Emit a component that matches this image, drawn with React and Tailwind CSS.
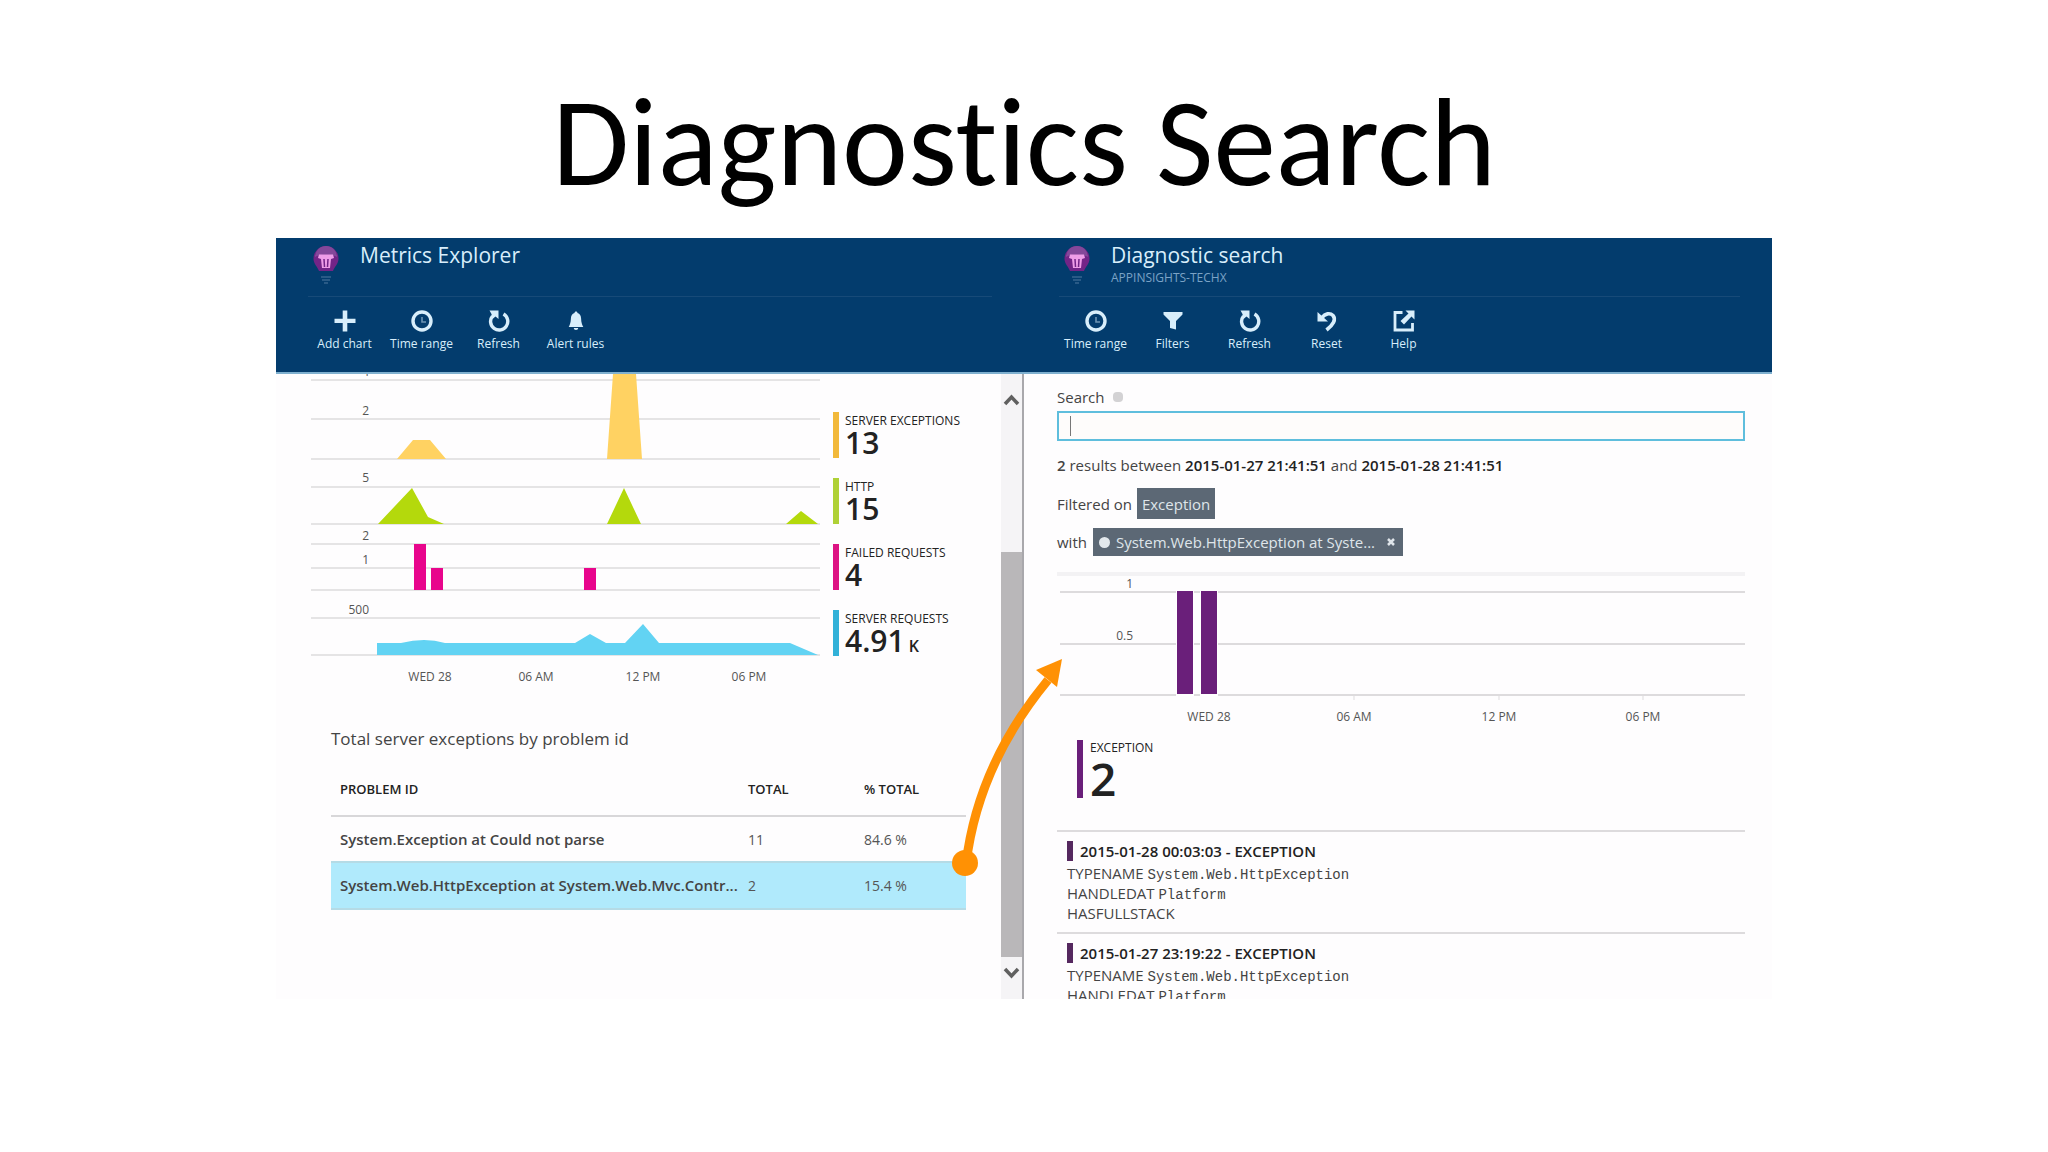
import React from "react";

const metricTools = [
  { label: "Add chart", icon: PlusIcon },
  { label: "Time range", icon: ClockIcon },
  { label: "Refresh", icon: RefreshIcon },
  { label: "Alert rules", icon: BellIcon },
];

const searchTools = [
  { label: "Time range", icon: ClockIcon },
  { label: "Filters", icon: FunnelIcon },
  { label: "Refresh", icon: RefreshIcon },
  { label: "Reset", icon: ResetIcon },
  { label: "Help", icon: HelpIcon },
];

const metrics = [
  { name: "SERVER EXCEPTIONS", value: "13", bar: "bg-[#f2b93b]" },
  { name: "HTTP", value: "15", bar: "bg-[#afd136]" },
  { name: "FAILED REQUESTS", value: "4", bar: "bg-[#dd1383]" },
  { name: "SERVER REQUESTS", value: "4.91", unit: "K", bar: "bg-[#32b1d8]" },
];

const problems = [
  { id: "System.Exception at Could not parse", total: 11, percent: "84.6 %" },
  {
    id: "System.Web.HttpException at System.Web.Mvc.Contr...",
    total: 2,
    percent: "15.4 %",
    selected: true,
  },
];

const events = ["2015-01-28 00:03:03", "2015-01-27 23:19:22"];

function PlusIcon() {
  return (
    <svg viewBox="0 0 22 22" className="size-[22px]" fill="currentColor">
      <path d="M8.7 0.5h4.6v8.2h8.2v4.4h-8.2v8.4h-4.6v-8.4h-8.2v-4.4h8.2z" />
    </svg>
  );
}

function ClockIcon() {
  return (
    <svg viewBox="0 0 22 22" className="size-[22px]" fill="none" stroke="currentColor">
      <circle cx="11" cy="11" r="9" strokeWidth="3.4" />
      <path d="M11 7v5h4" strokeWidth="1.6" opacity="0.5" />
    </svg>
  );
}

function RefreshIcon() {
  return (
    <svg viewBox="0 0 22 22" className="size-[22px]">
      <path
        d="M15.5 4a8.600 8.600 0 1 1-11 2"
        fill="none"
        stroke="currentColor"
        strokeWidth="3.4"
      />
      <path d="M1.500 0.500h9v8.500l-3-2.500-3 2.500-1-5z" fill="currentColor" />
    </svg>
  );
}

function BellIcon() {
  return (
    <svg viewBox="0 0 22 22" className="size-[22px]" fill="currentColor">
      <path d="M11 1.5c.9 0 1.5.6 1.5 1.6 2.4.8 3.5 2.8 3.6 5.4.1 4 .9 6 2.2 8.6H3.7c1.3-2.6 2.1-4.6 2.2-8.6.1-2.6 1.2-4.6 3.6-5.4 0-1 .6-1.6 1.5-1.6z" />
      <path d="M8.8 18h4.4c0 1.3-.9 2-2.2 2s-2.2-.7-2.2-2z" />
    </svg>
  );
}

function FunnelIcon() {
  return (
    <svg viewBox="0 0 22 22" className="size-[22px]" fill="currentColor">
      <path d="M1.500 2h19v2.500l-6.500 6.500v8.500l-6-1.500v-7l-6.500-6.500z" />
    </svg>
  );
}

function ResetIcon() {
  return (
    <svg viewBox="0 0 22 22" className="size-[22px]">
      <path
        d="M6 7.500c3-4 8-5 11-2 3.500 4 0 9.500-6.500 14.500"
        fill="none"
        stroke="currentColor"
        strokeWidth="3.600"
      />
      <path d="M1.500 2v9.500h10.500z" fill="currentColor" />
    </svg>
  );
}

function HelpIcon() {
  return (
    <svg viewBox="0 0 22 22" className="size-[22px]">
      <path
        d="M9.500 2.500h-7.500v17.500h17.500v-7"
        fill="none"
        stroke="currentColor"
        strokeWidth="2.800"
      />
      <path d="M12.500 0.500h9v9l-3-3-7.500 8-3.500-3.500 8-7.500z" fill="currentColor" />
    </svg>
  );
}

function BulbIcon() {
  return (
    <svg viewBox="0 0 28 40" className="h-10 w-7 shrink-0">
      <path
        d="M14 1a12.500 12.500 0 0 1 12.500 12.500c0 5.500-4 8-5.500 12.500h-14c-1.500-4.500-5.500-7-5.500-12.500a12.500 12.500 0 0 1 12.500-12.500z"
        fill="#732487"
      />
      <path d="M3 12a11 11 0 0 1 22 0c-4-3-18-3-22 0z" fill="#84489a" />
      <path d="M7 9.500h14l1 3.500-3 1-1 9h-8l-1-9-3-1z" fill="#ee9de8" />
      <path d="M12 14l.5 8M16 14l-.5 8" stroke="#732487" strokeWidth="1.500" />
      <path d="M9 32h10M10 35h8M12 38h4" stroke="#37648f" strokeWidth="1.500" />
    </svg>
  );
}

function PaneHeader({ title, subtitle, tools, inset }) {
  return (
    <header
      className={`h-[136px] shrink-0 border-b-2 border-[#7fb0cf] bg-[#033c6d] pr-8 text-[#d8eefb] ${inset}`}
    >
      <div className="flex h-[59px] gap-5 border-b border-[#174a78] pt-[7px] pl-1">
        <BulbIcon />
        <div>
          <h2 className="text-[21px] leading-5">{title}</h2>
          <p className="mt-[5px] text-[12px] leading-4 text-[#7ba3c6]">{subtitle}</p>
        </div>
      </div>
      <div className="-ml-[2px] flex pt-[13px]">
        {tools.map(({ label, icon: Icon }) => (
          <button
            key={label}
            type="button"
            className="flex w-[77px] flex-col items-center gap-1 whitespace-nowrap text-[12px] leading-4"
          >
            <Icon />
            {label}
          </button>
        ))}
      </div>
    </header>
  );
}

function MetricsChart() {
  return (
    <svg viewBox="0 0 509 316" className="block w-full text-[12px]">
      <g stroke="#dddbdd" strokeWidth="1.500">
        {[6, 45, 85, 113, 150, 170, 194, 216, 244, 281].map((y) => (
          <line key={y} x1="0" x2="509" y1={y} y2={y} />
        ))}
      </g>
      <path d="M86 85L102 66H119L135 85zM296 85L302 0H325L331 85z" fill="#ffd262" />
      <path
        d="M67 150L101 114L117 143L133 150zM296 150L313 114L330 150zM475 150L490 137L507 150z"
        fill="#b4d90c"
      />
      <path d="M103 170h12v46h-12zM120 194h12v22h-12zM273 194h12v22h-12z" fill="#e8058c" />
      <path
        d="M66 281V269H90Q114 263 134 269H264L279 260L295 269H314L332 250L348 269H479L507 281z"
        fill="#62d3f3"
      />
      <g fill="#555" textAnchor="end">
        <text x="58" y="2">4</text>
        <text x="58" y="41">2</text>
        <text x="58" y="108">5</text>
        <text x="58" y="166">2</text>
        <text x="58" y="190">1</text>
        <text x="58" y="240">500</text>
      </g>
      <g fill="#555" textAnchor="middle">
        <text x="119" y="307">WED 28</text>
        <text x="225" y="307">06 AM</text>
        <text x="332" y="307">12 PM</text>
        <text x="438" y="307">06 PM</text>
      </g>
    </svg>
  );
}

function Scrollbar() {
  return (
    <div className="flex w-[21px] flex-col bg-[#f5f4f6] text-[#606060]">
      <svg viewBox="0 0 21 56" className="h-14" fill="none" stroke="currentColor">
        <path d="M4 30l6.500-7 6.500 7" strokeWidth="3.500" />
      </svg>
      <div className="mt-[122px] flex-1 bg-[#b9b7b9]" />
      <svg viewBox="0 0 21 42" className="h-[42px]" fill="none" stroke="currentColor">
        <path d="M4 12l6.500 7 6.500-7" strokeWidth="3.500" />
      </svg>
    </div>
  );
}

function ProblemTable() {
  return (
    <div className="mt-[35px] mr-[35px] ml-5 text-[14px] text-[#444]">
      <h3 className="text-[17px] leading-7">Total server exceptions by problem id</h3>
      <table className="mt-3 w-full table-fixed border-collapse text-left">
        <thead>
          <tr className="h-[51px] border-b-2 border-[#d8d7d9] text-[13px] text-[#222]">
            <th className="pl-[9px] font-semibold">PROBLEM ID</th>
            <th className="w-[116px] font-semibold">TOTAL</th>
            <th className="w-[102px] font-semibold">% TOTAL</th>
          </tr>
        </thead>
        <tbody>
          {problems.map((problem) => (
            <tr
              key={problem.id}
              className={
                problem.selected
                  ? "h-[47px] border-y-2 border-[#b5dbe6] bg-[#b0eafc]"
                  : "h-[46px]"
              }
            >
              <td className="truncate pl-[9px] text-[15px] font-semibold">{problem.id}</td>
              <td className="text-[#555]">{problem.total}</td>
              <td className="text-[#555]">{problem.percent}</td>
            </tr>
          ))}
        </tbody>
      </table>
    </div>
  );
}

function ConnectorArrow() {
  return (
    <svg
      viewBox="0 0 116 224"
      className="pointer-events-none absolute top-[420px] -right-[42px] z-10 w-[116px]"
    >
      <path d="M16 206C24 140 50 80 98 22" fill="none" stroke="#ff9104" strokeWidth="9" />
      <circle cx="15" cy="205" r="13" fill="#ff9104" />
      <path d="M112 1L86 12L107 29z" fill="#ff9104" />
    </svg>
  );
}

function MetricsExplorer() {
  return (
    <section className="relative flex min-h-0 flex-col">
      <PaneHeader title="Metrics Explorer" tools={metricTools} inset="pl-8" />
      <div className="flex min-h-0 flex-1 border-r-2 border-[#a9a8ac]">
        <div className="min-w-0 flex-1 pl-[35px]">
          <div className="flex gap-[13px]">
            <div className="min-w-0 flex-1">
              <MetricsChart />
            </div>
            <ul className="flex w-[168px] flex-col gap-5 pt-[38px]">
              {metrics.map((metric) => (
                <li key={metric.name} className="flex h-[46px] gap-[6px]">
                  <span className={`w-[6px] ${metric.bar}`} />
                  <div className="whitespace-nowrap text-[#222]">
                    <p className="text-[12px] leading-[18px]">{metric.name}</p>
                    <p className="text-[30px] leading-[26px] font-semibold">
                      {metric.value}
                      {metric.unit && <span className="ml-1 text-[16px]">{metric.unit}</span>}
                    </p>
                  </div>
                </li>
              ))}
            </ul>
          </div>
          <ProblemTable />
        </div>
        <Scrollbar />
      </div>
      <ConnectorArrow />
    </section>
  );
}

function ExceptionChart() {
  return (
    <svg viewBox="0 0 688 152" className="mt-4 block w-full text-[12px]">
      <rect width="688" height="4" y="0" fill="#f3f2f4" />
      <g stroke="#dddbdd" strokeWidth="2">
        <line x1="3" x2="688" y1="20" y2="20" />
        <line x1="3" x2="688" y1="72" y2="72" />
        <line x1="3" x2="688" y1="123" y2="123" />
        <path d="M297 123v5M442 123v5M586 123v5" strokeWidth="1" />
      </g>
      <path d="M119 19h18v105h-18zM143 19h18v105h-18z" fill="#fff" />
      <path d="M120 19h16v103h-16zM144 19h16v103h-16z" fill="#6a1f7a" />
      <g fill="#555" textAnchor="end">
        <text x="76" y="16">1</text>
        <text x="76" y="68">0.5</text>
      </g>
      <g fill="#555" textAnchor="middle">
        <text x="152" y="149">WED 28</text>
        <text x="297" y="149">06 AM</text>
        <text x="442" y="149">12 PM</text>
        <text x="586" y="149">06 PM</text>
      </g>
    </svg>
  );
}

function DiagnosticSearch() {
  return (
    <section className="flex min-h-0 flex-col">
      <PaneHeader
        title="Diagnostic search"
        subtitle="APPINSIGHTS-TECHX"
        tools={searchTools}
        inset="pl-[35px]"
      />
      <div className="min-h-0 flex-1 overflow-hidden pt-[13px] pr-[27px] pl-[33px] text-[15px] leading-5 text-[#444]">
        <div className="flex items-center gap-2">
          <label htmlFor="search">Search</label>
          <span className="size-[10px] rounded-sm bg-[#d3d2d4]" />
        </div>
        <div className="mt-1 flex h-[30px] items-center border-2 border-[#5fbedd] bg-[#fefcfb] pl-[11px]">
          <span className="h-5 w-px bg-[#777]" />
          <input id="search" type="text" className="min-w-0 flex-1 outline-none" />
        </div>
        <p className="mt-[14px]">
          <b className="font-semibold">2</b> results between{" "}
          <b className="font-semibold text-[#222]">2015-01-27 21:41:51</b> and{" "}
          <b className="font-semibold text-[#222]">2015-01-28 21:41:51</b>
        </p>
        <div className="mt-[13px] flex h-[31px] items-center gap-[5px]">
          <span>Filtered on</span>
          <button type="button" className="h-full bg-[#5c6875] px-[5px] text-[#dfe5ea]">
            Exception
          </button>
        </div>
        <div className="mt-[9px] flex h-7 items-center gap-[6px]">
          <span>with</span>
          <div className="flex h-full w-[310px] items-center bg-[#5c6875] pr-2 pl-[6px] text-[#dfe5ea]">
            <span className="mr-[6px] size-[11px] shrink-0 rounded-full bg-[#e3e8ec]" />
            <span className="whitespace-nowrap">System.Web.HttpException at Syste...</span>
            <button type="button" aria-label="Remove filter" className="ml-auto">
              <svg viewBox="0 0 8 8" className="size-2" stroke="currentColor" strokeWidth="2.500">
                <path d="M1 1l6 6M7 1l-6 6" />
              </svg>
            </button>
          </div>
        </div>
        <ExceptionChart />
        <div className="mt-4 ml-5 flex h-[58px] gap-[7px] text-[#222]">
          <span className="w-[6px] bg-[#6a1f7a]" />
          <div>
            <p className="text-[12px] leading-4">EXCEPTION</p>
            <p className="text-[46px] leading-[44px] font-semibold">2</p>
          </div>
        </div>
        <ul className="mt-8">
          {events.map((time) => (
            <li key={time} className="border-t-2 border-[#dddbdd] px-[10px] pt-[9px] pb-[9px]">
              <h4 className="mb-[2px] flex gap-[7px] font-semibold text-[#222]">
                <span className="w-[6px] bg-[#55285f]" />
                {time} - EXCEPTION
              </h4>
              <p>
                TYPENAME{" "}
                <span className="font-['Liberation_Mono',monospace] text-[14px] leading-4">
                  System.Web.HttpException
                </span>
              </p>
              <p>
                HANDLEDAT{" "}
                <span className="font-['Liberation_Mono',monospace] text-[14px] leading-4">
                  Platform
                </span>
              </p>
              <p>HASFULLSTACK</p>
            </li>
          ))}
        </ul>
      </div>
    </section>
  );
}

function App() {
  return (
    <main className="min-h-screen bg-white font-['Open_Sans','Noto_Sans',sans-serif]">
      <h1 className="pt-[73px] text-center font-['Carlito','Lato',sans-serif] text-[125px] leading-[140px] text-black [font-variant-ligatures:none]">
        Diagnostics Search
      </h1>
      <div className="mx-auto mt-[25px] grid h-[761px] w-full max-w-[1496px] grid-cols-2 grid-rows-1 overflow-hidden bg-[#fefdfe]">
        <MetricsExplorer />
        <DiagnosticSearch />
      </div>
    </main>
  );
}

export default App;
